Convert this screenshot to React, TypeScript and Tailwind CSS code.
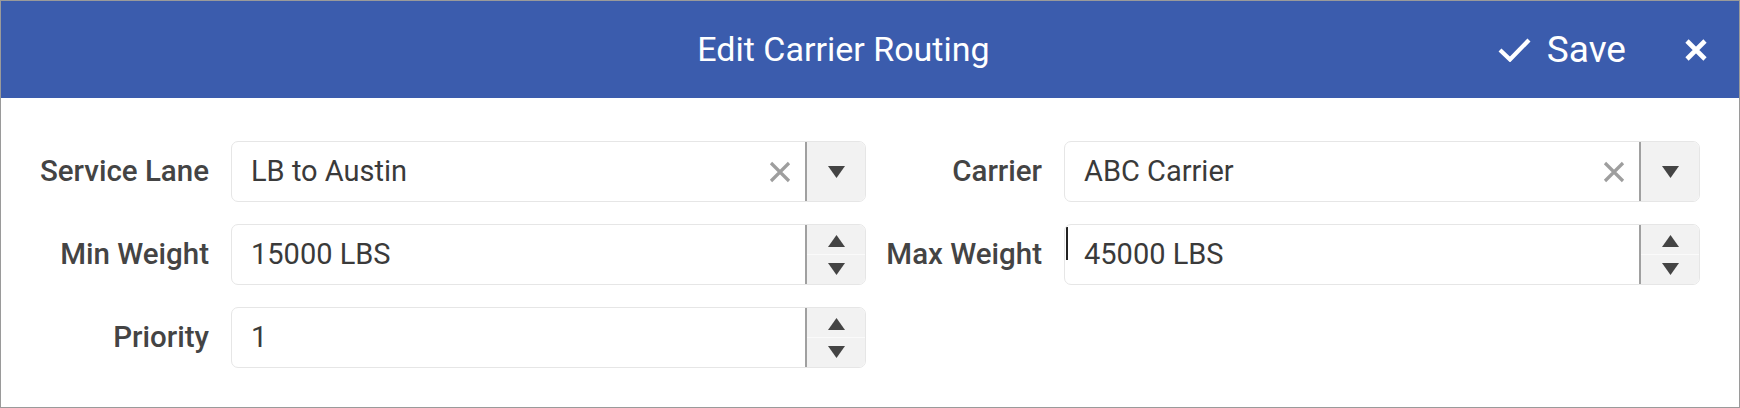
import React from 'react'

const font = { fontFamily: 'Roboto, "Liberation Sans", sans-serif' }

function ClearIcon() {
  return (
    <svg width="22" height="22" viewBox="0 0 22 22" className="shrink-0">
      <path d="M2 2 L20 20 M20 2 L2 20" stroke="#9e9e9e" strokeWidth="3.2" strokeLinecap="butt" />
    </svg>
  )
}

function Tri({ up }: { up?: boolean }) {
  return (
    <svg width="17" height="12" viewBox="0 0 17 12">
      <polygon points={up ? '8.5,0 17,12 0,12' : '0,0 17,0 8.5,12'} fill="#444" />
    </svg>
  )
}

function SelectBox({ value }: { value: string }) {
  return (
    <div className="flex h-[61px] rounded-[7px] border border-[#e6e6e6] bg-white overflow-hidden">
      <div className="flex flex-1 items-center pl-[19px] pr-[14px] text-[29px] text-[#3a3a3a]">
        <span className="flex-1">{value}</span>
        <ClearIcon />
      </div>
      <div className="w-[2px] bg-[#a0a0a0]" />
      <div className="flex w-[58px] items-center justify-center bg-[#f2f2f2]">
        <Tri />
      </div>
    </div>
  )
}

function NumberBox({ value, caret }: { value: string; caret?: boolean }) {
  return (
    <div className="relative flex h-[61px] rounded-[7px] border border-[#e6e6e6] bg-white overflow-hidden">
      {caret && <div className="absolute left-[1px] top-[2px] h-[33px] w-[2px] bg-[#222]" />}
      <div className="flex flex-1 items-center pl-[19px] text-[29px] text-[#3a3a3a]">{value}</div>
      <div className="w-[2px] bg-[#a0a0a0]" />
      <div className="flex w-[58px] flex-col bg-[#f2f2f2]">
        <div className="flex flex-1 items-center justify-center border-b border-[#fafafa] pt-[2px]">
          <Tri up />
        </div>
        <div className="flex flex-1 items-center justify-center pb-[2px]">
          <Tri />
        </div>
      </div>
    </div>
  )
}

function Label({ text, wide }: { text: string; wide?: boolean }) {
  return (
    <div className={`flex items-center justify-end pr-[22px] text-[29.5px] font-medium text-[#444] ${wide ? 'w-[230px]' : 'w-[198px]'}`}>
      {text}
    </div>
  )
}

export default function App() {
  return (
    <div style={font} className="h-[408px] w-[1740px] border border-[#9a9a9a] bg-white">
      <div className="flex h-[97px] items-center bg-[#3b5cad] text-white">
        <div className="flex-1 pl-[188px] text-center text-[34px]">Edit Carrier Routing</div>
        <div className="flex items-center pr-[31px]">
          <svg width="33" height="24" viewBox="0 0 33 24">
            <polyline points="2,12 12,21.5 31,2" fill="none" stroke="white" strokeWidth="4.2" />
          </svg>
          <span className="ml-[16px] text-[37px]">Save</span>
          <svg width="24" height="24" viewBox="0 0 24 24" className="ml-[58px]">
            <path d="M3 3 L21 21 M21 3 L3 21" stroke="white" strokeWidth="4.6" />
          </svg>
        </div>
      </div>

      <div className="grid grid-cols-[230px_635px_198px_636px] gap-y-[22px] pt-[43px]">
        <Label text="Service Lane" wide />
        <SelectBox value="LB to Austin" />
        <Label text="Carrier" />
        <SelectBox value="ABC Carrier" />

        <Label text="Min Weight" wide />
        <NumberBox value="15000 LBS" />
        <Label text="Max Weight" />
        <NumberBox value="45000 LBS" caret />

        <Label text="Priority" wide />
        <NumberBox value="1" />
        <div />
        <div />
      </div>
    </div>
  )
}
